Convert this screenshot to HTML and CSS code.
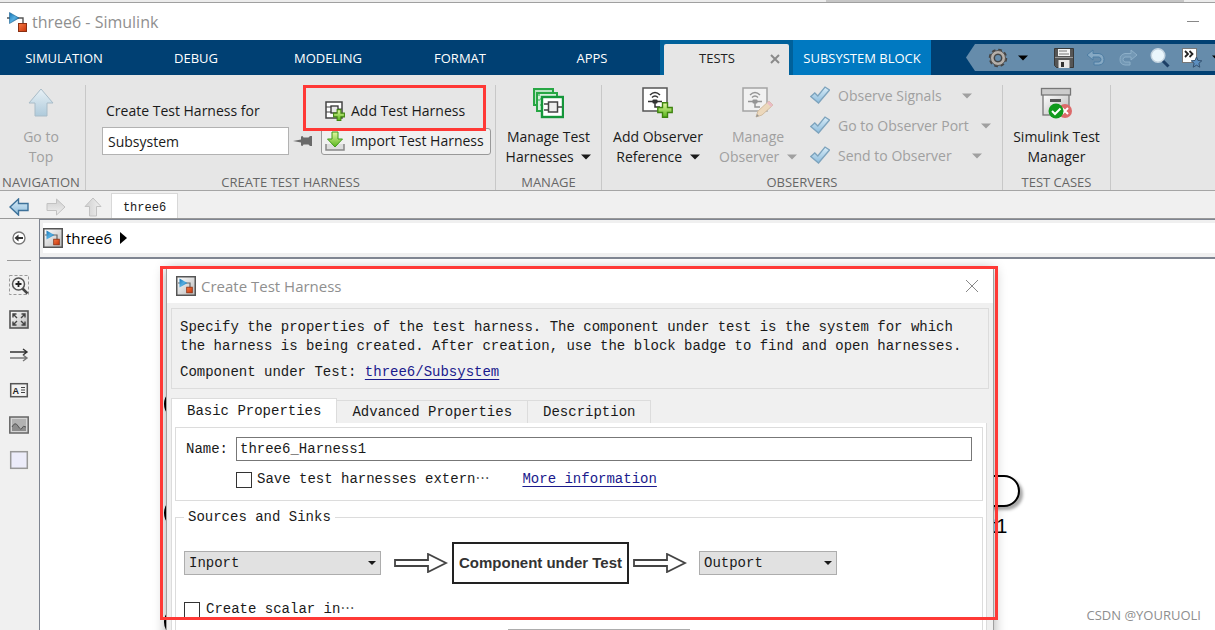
FILE: index.html
```html
<!DOCTYPE html>
<html lang="en">
<head>
<meta charset="utf-8">
<title>three6 - Simulink</title>
<link rel="stylesheet" href="styles.css">
</head>
<body>
<svg class="defs" aria-hidden="true">
  <defs>
    <linearGradient id="blue" x1="0" y1="0" x2="0" y2="1"><stop offset="0" stop-color="#d9ecf7"/><stop offset="1" stop-color="#8dbcdc"/></linearGradient>
    <linearGradient id="pale" x1="0" y1="0" x2="0" y2="1"><stop offset="0" stop-color="#e8f1f6"/><stop offset="1" stop-color="#aecadb"/></linearGradient>
    <linearGradient id="gray" x1="0" y1="0" x2="0" y2="1"><stop offset="0" stop-color="#f0f0f0"/><stop offset="1" stop-color="#cfcfcf"/></linearGradient>
    <linearGradient id="green" x1="0" y1="0" x2="0" y2="1"><stop offset="0" stop-color="#e4f9a0"/><stop offset="1" stop-color="#58b51c"/></linearGradient>
    <linearGradient id="tri" x1="0" y1="0" x2="1" y2="1"><stop offset="0" stop-color="#1473b4"/><stop offset=".5" stop-color="#55aee0"/><stop offset="1" stop-color="#0f5f9c"/></linearGradient>
    <linearGradient id="orange" x1="0" y1="0" x2="1" y2="1"><stop offset="0" stop-color="#f57a45"/><stop offset="1" stop-color="#c93409"/></linearGradient>
    <linearGradient id="steel" x1="0" y1="0" x2="1" y2="1"><stop offset="0" stop-color="#ffffff"/><stop offset="1" stop-color="#b8b8b8"/></linearGradient>
  </defs>
  <symbol id="model" viewBox="0 0 20 20">
    <path d="M0 6h3M10 6h6v6" fill="none" stroke="#555" stroke-width="1.4"/>
    <path d="M2.500 .5v11L12 6z" fill="url(#tri)" stroke="#1a5f8e" stroke-width=".6"/>
    <rect x="11.500" y="11.500" width="8" height="8" fill="url(#orange)" stroke="#8a2f12"/>
  </symbol>
  <symbol id="model-box" viewBox="0 0 20 20">
    <rect x=".75" y=".75" width="18.500" height="18.500" fill="url(#steel)" stroke="#555" stroke-width="1.500"/>
    <path d="M2 7h2M9 7h5v5" fill="none" stroke="#666" stroke-width="1.200"/>
    <path d="M3.500 2.500v9L11.500 7z" fill="url(#tri)"/>
    <rect x="10.700" y="11.200" width="5.600" height="5.600" fill="url(#orange)" stroke="#8a2f12" stroke-width=".8"/>
  </symbol>
  <symbol id="caret" viewBox="0 0 10 6"><path d="M0 .5h10L5 5.500z" fill="currentColor"/></symbol>
  <symbol id="check" viewBox="0 0 20 20">
    <path d="M.8 10.500l4-3.500 3 3L15 1l4.500 3L8.500 17z" fill="url(#blue)" stroke="#7da3bd" stroke-width="1.300"/>
  </symbol>
  <symbol id="plus" viewBox="0 0 16 16"><path d="M5.500.8h5v4.700h4.700v5h-4.700v4.700h-5v-4.700H.8v-5h4.700z" fill="url(#green)" stroke="#3f8410" stroke-width="1.400"/></symbol>
  <symbol id="arrow" viewBox="0 0 20 18"><path d="M1 9l8.500-8v4.500H19v7H9.500V17z"/></symbol>
  <symbol id="flow" viewBox="0 0 54 20"><path d="M1 7h33V1l18 9-18 9v-6H1z" fill="#fff" stroke="#444" stroke-width="1.800"/></symbol>
  <symbol id="observer" viewBox="0 0 32 32">
    <rect x="1" y="1" width="24" height="23" fill="#fff" stroke="#555" stroke-width="1.500"/>
    <path d="M8 8q5-5 10 0M10 10.500q3-3 6 0M6 14.500h14M13 14v6h5" fill="none" stroke="#333" stroke-width="1.500"/>
    <rect x="10.500" y="12.500" width="5" height="4" rx="1" fill="#333"/>
  </symbol>
</svg>

<div class="backdrop"><span class="behind"></span></div>
<header class="titlebar">
  <svg class="ico20"><use href="#model"/></svg>
  <h1>three6 - Simulink</h1>
  <button class="minimize" aria-label="Minimize"></button>
</header>

<nav class="tabs">
  <button>SIMULATION</button><button>DEBUG</button><button>MODELING</button><button>FORMAT</button><button>APPS</button>
  <div class="current">
    <button class="tests">TESTS</button>
    <button class="close" aria-label="Close tab"><svg viewBox="0 0 10 10"><path d="M1 1l8 8M9 1L1 9" stroke="#8a8a8a" stroke-width="2"/></svg></button>
  </div>
  <button class="block">SUBSYSTEM BLOCK</button>
  <div class="quick">
    <button aria-label="Settings"><svg class="ico20" viewBox="0 0 20 20"><circle cx="10" cy="10" r="8" fill="none" stroke="#444" stroke-width="2.500" stroke-dasharray="3.600 2.680"/><circle cx="10" cy="10" r="6" fill="#777" stroke="#b5afa9" stroke-width="3"/><circle cx="10" cy="10" r="7.500" fill="none" stroke="#555"/><circle cx="10" cy="10" r="3.600" fill="#668cab" stroke="#444" stroke-width="1.300"/></svg></button>
    <svg class="caret"><use href="#caret"/></svg>
    <span class="divider"></span>
    <button aria-label="Save"><svg class="ico20" viewBox="0 0 20 20"><path d="M.5.5h19v19h-17l-2-2z" fill="#555" stroke="#383838"/><rect x="4" y="1" width="12" height="7" fill="#f3f3f3"/><path d="M5 3h8M5 6h10" stroke="#777"/><rect x="1" y="9" width="18" height="1" fill="#999"/><rect x="4.500" y="12" width="11" height="8" fill="#e8e8e8"/><rect x="7" y="14" width="3" height="5" fill="#333"/></svg></button>
    <button aria-label="Undo"><svg class="ico20" viewBox="0 0 20 20"><path d="M1 7l6-5v3.500h6q5 1 5 6t-5 5.500H8v-3h5q2-.5 2-2.500t-2-2.500H7V12z" fill="#86a9c4" stroke="#4d7da3"/></svg></button>
    <button aria-label="Redo"><svg class="ico20" viewBox="0 0 20 20"><path d="M19 7l-6-5v3.500H7q-5 1-5 6T7 17h5v-3H7q-2-.5-2-2.500T7 9h6v3z" fill="#7398b5" stroke="#8dafc8"/></svg></button>
    <button aria-label="Search"><svg class="ico20" viewBox="0 0 20 20"><path d="M12 12l6.500 6.500" stroke="#1d3f66" stroke-width="3"/><circle cx="8" cy="7.500" r="6.800" fill="#eaf6fc" stroke="#c3d3df" stroke-width="1.500"/></svg></button>
    <button aria-label="Favorites"><svg class="ico20" viewBox="0 0 20 20"><rect x=".5" y=".5" width="14" height="14" fill="#fff" stroke="#777"/><path d="M3 3l3 3-3 3M7.500 3l3 3-3 3" fill="none" stroke="#222" stroke-width="1.800"/><path d="M14.500 9l1.500 3.500 3.800.3-2.900 2.500.9 3.900-3.300-2-3.300 2 .9-3.900-2.900-2.500 3.800-.3z" fill="#5c8fc0" stroke="#34516f"/></svg></button>
    <svg class="caret"><use href="#caret"/></svg>
  </div>
</nav>

<section class="toolstrip">
  <div class="group g-nav">
    <div class="tools">
      <button class="tool" disabled><svg class="ico32" viewBox="0 0 32 32"><path d="M16 2l12 14h-6v13H10V16H4z" fill="url(#pale)" stroke="#a9bcc8"/></svg><span>Go to<br>Top</span></button>
    </div>
    <h2>NAVIGATION</h2>
  </div>
  <div class="group g-create">
    <div class="harness">
      <label for="target">Create Test Harness for</label>
      <span></span>
      <button class="row-btn add"><svg class="ico20" viewBox="0 0 20 20"><rect x="1" y="1" width="16" height="16" fill="#fff" stroke="#444" stroke-width="1.500"/><path d="M1 6h5M1 11h5M12 8h5" stroke="#444" stroke-width="1.200"/><rect x="6" y="5" width="7" height="7" fill="#e8e8e8" stroke="#333" stroke-width="1.300"/><use href="#plus" x="8" y="8" width="12" height="12"/></svg>Add Test Harness</button>
      <input id="target" type="text" value="Subsystem">
      <svg class="pin" viewBox="0 0 20 12"><path d="M0 6l8-1.500V2q0-1 1.500-1l1 1.500h5L17 1h2v10h-2l-1.500-1.500h-5l-1 1.500Q8 11 8 10V7.500z" fill="#6a6a6a"/></svg>
      <button class="row-btn import"><svg class="ico20" viewBox="0 0 20 20"><path d="M1 13v6h18v-6" fill="#ddd" stroke="#888" stroke-width="1.500"/><path d="M7 1h6v7h4.500L10 16 2.500 8H7z" fill="url(#green)" stroke="#3f9a18"/></svg>Import Test Harness</button>
    </div>
    <h2>CREATE TEST HARNESS</h2>
    <span class="mark mark-add"></span>
  </div>
  <div class="group g-manage">
    <div class="tools">
      <button class="tool"><svg class="ico32" viewBox="0 0 32 32"><g stroke="#27a744" stroke-width="2"><rect x="2" y="2" width="19" height="16" fill="#b9e3c3"/><rect x="5" y="6" width="20" height="18" fill="#d5eedb"/><path d="M4 8h4M4 13h4M8 12h4M8 18h4" stroke-width="1.200"/><rect x="10" y="10" width="21" height="20" fill="#fff" stroke="#15963a" stroke-width="2.400"/></g><path d="M12 17h5M12 23h5M25 20h5" stroke="#444" stroke-width="1.300"/><rect x="16.500" y="15" width="9" height="10" fill="#eee" stroke="#444" stroke-width="1.500"/></svg><span>Manage Test<br>Harnesses <svg class="caret"><use href="#caret"/></svg></span></button>
    </div>
    <h2>MANAGE</h2>
  </div>
  <div class="group g-observers">
    <div class="tools">
      <button class="tool w-add"><svg class="ico32" viewBox="0 0 32 32"><use href="#observer" width="32" height="32"/><use href="#plus" x="15" y="15" width="16" height="16"/></svg><span>Add Observer<br>Reference <svg class="caret"><use href="#caret"/></svg></span></button>
      <button class="tool w-manage" disabled><svg class="ico32 faded" viewBox="0 0 32 32"><use href="#observer" width="32" height="32"/><path d="M14 30l2-6 11-10 4 4-11 10z" fill="#f5c98a" stroke="#b98a4c"/><path d="M25 16l2-2 4 4-2 2z" fill="#f08aa0"/><path d="M14 30l1-3 2 2z" fill="#333"/></svg><span>Manage<br>Observer <svg class="caret"><use href="#caret"/></svg></span></button>
      <div class="checks">
        <button disabled><svg class="ico20"><use href="#check"/></svg>Observe Signals<svg class="caret wide"><use href="#caret"/></svg></button>
        <button disabled><svg class="ico20"><use href="#check"/></svg>Go to Observer Port<svg class="caret"><use href="#caret"/></svg></button>
        <button disabled><svg class="ico20"><use href="#check"/></svg>Send to Observer<svg class="caret wide"><use href="#caret"/></svg></button>
      </div>
    </div>
    <h2>OBSERVERS</h2>
  </div>
  <div class="group g-cases">
    <div class="tools">
      <button class="tool"><svg class="ico32" viewBox="0 0 32 32"><rect x="3" y="7" width="26" height="21" fill="url(#steel)" stroke="#777" stroke-width="1.300"/><rect x="1.500" y="1.500" width="29" height="6.500" fill="#ccc" stroke="#777" stroke-width="1.300"/><path d="M10 13.500h11" stroke="#555" stroke-width="3"/><circle cx="25" cy="24" r="7" fill="#dc6a6a"/><path d="M22 21l6 6M28 21l-6 6" stroke="#fff" stroke-width="2"/><circle cx="16" cy="24" r="7.500" fill="#119a1d"/><path d="M12 24l3 3 5.500-5.500" fill="none" stroke="#fff" stroke-width="2"/></svg><span>Simulink Test<br>Manager</span></button>
    </div>
    <h2>TEST CASES</h2>
  </div>
</section>

<div class="doc-tabs">
  <button aria-label="Back"><svg class="nav-arrow back"><use href="#arrow"/></svg></button>
  <button aria-label="Forward" disabled><svg class="nav-arrow fwd"><use href="#arrow"/></svg></button>
  <button aria-label="Up" disabled><svg class="nav-arrow up"><use href="#arrow"/></svg></button>
  <button class="doc">three6</button>
</div>

<main class="workspace">
  <aside class="palette">
    <button aria-label="Hide browser"><svg class="ico20" viewBox="0 0 20 20"><circle cx="10" cy="10" r="6" fill="#fff" stroke="#777" stroke-width="1.300"/><path d="M5.500 10l4-3.500V9H14v2H9.500v2.500z" fill="#333"/></svg></button>
    <hr>
    <button aria-label="Zoom"><svg class="ico20" viewBox="0 0 20 20"><rect x=".5" y=".5" width="19" height="19" fill="none" stroke="#999" stroke-dasharray="3 2"/><path d="M13 13l5.500 5.500" stroke="#444" stroke-width="2.500"/><circle cx="9.500" cy="9" r="6" fill="#f5f5f5" stroke="#555" stroke-width="1.500"/><path d="M9.500 6v6M6.500 9h6" stroke="#222" stroke-width="1.800"/></svg></button>
    <button aria-label="Fit to view"><svg class="ico20" viewBox="0 0 20 20"><rect x="1" y="1" width="18" height="17" fill="url(#steel)" stroke="#555" stroke-width="1.600"/><path d="M4 7.500V4h3.500M12.500 4H16v3.500M16 11.500V15h-3.500M7.500 15H4v-3.500M4 4l4 4M16 4l-4 4M16 15l-4-4M4 15l4-4" fill="none" stroke="#444" stroke-width="1.400"/></svg></button>
    <button aria-label="Sample time"><svg class="ico20" viewBox="0 0 20 20"><g fill="none" stroke-width="1.400"><path d="M1 7h16M14 4l4 3-4 3" stroke="#333"/><path d="M1 13h16M14 10l4 3-4 3" stroke="#777"/></g></svg></button>
    <button aria-label="Annotation"><svg class="ico20" viewBox="0 0 20 20"><rect x="1.700" y="3.700" width="16.600" height="13" fill="#f2f2f2" stroke="#555" stroke-width="1.500"/><text class="glyph" x="3.500" y="13.500">A</text><path d="M12 7.500h4M12 10h4M12 12.500h4" stroke="#444"/></svg></button>
    <button aria-label="Image"><svg class="ico20" viewBox="0 0 20 20"><rect x=".8" y="2" width="18.400" height="16" fill="#d5d5d5" stroke="#666" stroke-width="1.500"/><rect x="3" y="4" width="14" height="12" fill="#b2b2b2"/><path d="M3 12q3-6 6-1t4 2 4-1v4H3z" fill="#8c8c8c"/><path d="M3 12q3-6 6-1t4 2 4-1" fill="none" stroke="#555"/></svg></button>
    <button aria-label="Area"><svg class="ico20" viewBox="0 0 20 20"><rect x="1.700" y="1.700" width="16.600" height="16.600" fill="#ececfa" stroke="#999" stroke-width="1.500"/></svg></button>
  </aside>
  <section class="editor">
    <div class="crumbs"><div class="path">
      <svg class="ico20"><use href="#model-box"/></svg><span>three6</span>
      <svg class="next" viewBox="0 0 8 12"><path d="M1 0l7 6-7 6z"/></svg>
    </div></div>
    <div class="canvas">
      <span class="port in-a"></span><span class="port in-b"></span><span class="port in-c"></span>
      <span class="port out"></span><span class="port-name">Out1</span>

      <section class="dialog" aria-label="Create Test Harness">
        <header>
          <svg class="ico20"><use href="#model-box"/></svg>
          <h2>Create Test Harness</h2>
          <button aria-label="Close"><svg viewBox="0 0 14 14"><path d="M1 1l12 12M13 1L1 13" stroke="#888" stroke-width="1"/></svg></button>
        </header>
        <div class="about">
          <p>Specify the properties of the test harness. The component under test is the system for which<br>the harness is being created. After creation, use the block badge to find and open harnesses.</p>
          <p>Component under Test: <a href="#subsystem">three6/Subsystem</a></p>
        </div>
        <div class="prop-tabs">
          <button class="on">Basic Properties</button><button>Advanced Properties</button><button>Description</button>
        </div>
        <div class="panel">
          <div class="box">
            <div class="name-row"><label for="name">Name:</label><input id="name" type="text" value="three6_Harness1"></div>
            <div class="save-row">
              <input id="save" type="checkbox"><label for="save">Save test harnesses extern<span class="dots" lang="zh-CN">…</span></label>
              <a href="#info">More information</a>
            </div>
          </div>
          <fieldset>
            <legend>Sources and Sinks</legend>
            <div class="flow-row">
              <span class="pick source"><select aria-label="Source"><option>Inport</option></select><svg class="caret"><use href="#caret"/></svg></span>
              <svg class="flow"><use href="#flow"/></svg>
              <span class="cut">Component under Test</span>
              <svg class="flow"><use href="#flow"/></svg>
              <span class="pick sink"><select aria-label="Sink"><option>Outport</option></select><svg class="caret"><use href="#caret"/></svg></span>
            </div>
            <div class="scalar-row"><input id="scalar" type="checkbox"><label for="scalar">Create scalar in<span class="dots" lang="zh-CN">…</span></label></div>
            <div class="more" role="presentation"></div>
          </fieldset>
        </div>
      </section>
      <span class="mark mark-dialog"></span>
      <span class="credit">CSDN @YOURUOLI</span>
    </div>
  </section>
</main>
</body>
</html>
```
FILE: styles.css
```css
* { box-sizing: border-box; }
body {
  margin: 0;
  height: 100vh;
  overflow: hidden;
  display: flex;
  flex-direction: column;
  background: #fff;
  color: #1a1a1a;
  font: 14px/20px "Open Sans", "Noto Sans", sans-serif;
}
h1, h2, p { margin: 0; font-weight: 400; }
button { border: 0; padding: 0; background: none; color: inherit; font: inherit; }
input, select { font: inherit; color: inherit; }
svg { display: block; flex: none; }
.defs { position: absolute; width: 0; height: 0; }
.ico20 { width: 20px; height: 20px; }
.ico32 { width: 32px; height: 32px; }
.caret { width: 10px; height: 6px; }
.mark { position: absolute; border: 3px solid #ff3936; pointer-events: none; }

.backdrop { flex: none; height: 3px; padding-left: 68%; background: #ececec; border-bottom: 1px solid #a0a0a0; }
.behind { display: block; width: 92%; max-width: 360px; height: 2px; background: #c6c6c6; }
.titlebar { flex: none; display: flex; align-items: center; height: 37px; padding: 0 16px 0 7px; gap: 5px; }
.titlebar h1 { flex: 1; color: #8f8f8f; font-size: 16px; }
.minimize { width: 12px; height: 1px; background: #888; }

.tabs { flex: none; display: flex; height: 35px; background: #004073; color: #fff; }
.tabs > button { flex: none; width: 132px; padding-right: 4px; font-size: 13px; }
.current { flex: none; display: flex; width: 133px; padding: 4px 4px 0; background: #00619b; }
.current button { background: #e6e6e6; }
.current .tests { flex: 1; padding: 0 0 4px 9px; border-radius: 2px 0 0; color: #222; font-size: 13px; }
.current .close { width: 28px; padding: 0 0 2px 9px; border-radius: 0 2px 0 0; }
.close svg { width: 10px; height: 10px; }
.tabs > .block { width: 138px; padding: 0; background: #0079c1; }
.quick {
  flex: none; display: flex; align-items: center; gap: 12px;
  width: 249px; margin: 4px 0 4px auto; padding-left: 22px; overflow: hidden;
  background: #668cab; color: #000;
  clip-path: polygon(0 50%, 9px 0, 100% 0, 100% 100%, 9px 100%);
}
.quick .caret { margin-left: -2px; }
.divider { width: 2px; height: 22px; margin-right: 2px; background: #48749a; }

.toolstrip { flex: none; display: flex; height: 116px; padding-top: 10px; background: #e6e6e6; border-bottom: 1px solid #a5a5a5; }
.group { position: relative; flex: none; display: flex; flex-direction: column; border-right: 1px solid #c8c8c8; }
.group h2 { height: 16px; color: #666; font-size: 13px; line-height: 16px; text-align: center; white-space: nowrap; }
.g-nav { width: 86px; padding-right: 3px; }
.g-create { width: 410px; }
.g-manage { width: 106px; }
.g-observers { width: 401px; }
.g-cases { width: 108px; }
.tools { flex: 1; display: flex; justify-content: center; align-items: flex-start; }
.tool { display: flex; flex-direction: column; align-items: center; gap: 8px; padding-top: 2px; white-space: nowrap; }
.tool .caret { display: inline-block; margin-left: 4px; vertical-align: 2px; }
button:disabled { color: #a0a0a0; }
.faded { opacity: .45; }
.harness { flex: 1; display: grid; grid-template: 30px 30px / 187px 24px 170px; gap: 0 4px; align-content: start; align-items: center; padding: 11px 0 0 16px; }
.harness label { padding-left: 4px; }
.harness input { width: 100%; height: 28px; padding: 0 5px; border: 1px solid #b2b2b2; background: #fff; }
.pin { width: 20px; height: 12px; }
.row-btn { display: flex; align-items: center; gap: 6px; height: 27px; padding-left: 3px; border: 1px solid transparent; border-radius: 3px; white-space: nowrap; }
.import { background: #f0f0f0; border-color: #999; }
.mark-add { left: 217px; top: 0; width: 183px; height: 46px; }
.g-observers .tools { justify-content: flex-start; gap: 12px; padding-left: 8px; }
.w-add { width: 96px; }
.w-manage { width: 80px; }
.checks { display: flex; flex-direction: column; margin-top: -4px; }
.checks button { display: flex; align-items: center; gap: 8px; height: 30px; white-space: nowrap; }
.checks .caret { margin-left: 4px; }
.checks .wide { margin-left: 12px; }

.doc-tabs { flex: none; display: flex; height: 28px; padding-left: 9px; background: #f0f0f0; border-bottom: 1px solid #999; }
.doc-tabs button { width: 37px; padding-top: 4px; }
.nav-arrow { width: 20px; height: 18px; fill: url(#gray); stroke: #c2c2c2; }
.nav-arrow.back { fill: url(#blue); stroke: #3d7199; stroke-width: 1.400; }
.nav-arrow.fwd { transform: rotate(180deg); }
.nav-arrow.up { transform: rotate(90deg); }
.doc-tabs .doc { width: 67px; margin: 2px 0 0 -9px; background: #fff; border: 1px solid #d8d8d8; border-bottom: 0; font: 12px "Liberation Mono", monospace; }

.workspace { flex: 1; display: flex; min-height: 0; }
.palette { flex: none; display: flex; flex-direction: column; align-items: center; gap: 15px; width: 40px; padding: 9px 1px 0 0; background: #f0f0f0; border-right: 1px solid #7f8591; }
.palette hr { width: 24px; margin: -3px 0 -1px; border: 0; border-top: 1px solid #999; }
.glyph { font: bold 9px "Liberation Sans", sans-serif; fill: #222; }
.editor { flex: 1; display: flex; flex-direction: column; min-width: 0; }
.crumbs { flex: none; height: 40px; padding: 3px 0 3px 3px; background: #f0f0f0; border-top: 1px solid #7f8591; border-bottom: 2px solid #7f8591; }
.path { display: flex; align-items: center; gap: 3px; height: 30px; background: #fff; color: #000; font-size: 15px; }
.next { width: 8px; height: 12px; margin-left: 4px; }
.canvas { position: relative; flex: 1; overflow: hidden; }

.port { position: absolute; width: 60px; height: 32px; border: 2px solid #000; border-radius: 16px; background: #fff; box-shadow: 3px 3px 3px #aaa; }
.in-a { left: 124px; top: 129px; }
.in-b { left: 124px; top: 238px; }
.in-c { left: 124px; top: 347px; }
.out { left: 920px; top: 216px; }
.port-name { position: absolute; left: 924px; top: 255px; color: #000; font: 20px/24px "Liberation Sans", sans-serif; }
.mark-dialog { left: 120px; top: 7px; width: 838px; height: 354px; }
.credit { position: absolute; right: 14px; bottom: 5px; color: #8e8e8e; font-size: 13px; }

.dialog {
  position: absolute; left: 126px; top: 8px; width: 828px;
  background: #f0f0f0; border: 1px solid #a0a0a0;
  box-shadow: 0 2px 12px #0005;
  font: 14px/19px "Liberation Mono", monospace;
}
.dialog header { display: flex; align-items: center; gap: 5px; height: 35px; padding: 0 14px 0 9px; background: #fff; }
.dialog h2 { flex: 1; color: #8f8f8f; font: 15px "Open Sans", sans-serif; }
.dialog header svg:not(.ico20) { width: 14px; height: 14px; }
.dialog a { color: #1a1a8c; text-underline-offset: 3px; }
.about { height: 81px; margin: 5px 4px 9px; padding: 9px 8px; border: 1px solid #dcdcdc; white-space: nowrap; }
.about p + p { margin-top: 7px; }
.prop-tabs { display: flex; align-items: flex-end; padding-left: 4px; }
.prop-tabs button { height: 23px; padding: 0 15px; border: 1px solid #dcdcdc; border-width: 1px 1px 0 0; }
.prop-tabs .on { height: 25px; border-left-width: 1px; background: #fff; }
.panel { margin: 0 6px 0 4px; padding: 4px 3px; background: #fff; border: 1px solid #dcdcdc; border-top: 0; }
.box { height: 74px; padding: 9px 10px; border: 1px solid #dcdcdc; }
.name-row { display: flex; align-items: center; gap: 8px; }
.name-row input { flex: 1; height: 24px; padding: 0 3px; border: 1px solid #777; }
.save-row { display: flex; align-items: center; gap: 5px; margin: 9px 0 0 50px; }
.save-row a { margin-left: 28px; }
input[type="checkbox"] { appearance: none; flex: none; width: 16px; height: 16px; margin: 0; border: 1px solid #333; background: #fff; }
.dots { font-family: "Noto Sans CJK SC", sans-serif; line-height: 1; }
fieldset { margin: 7px 0 0; padding: 0 8px; border: 1px solid #dcdcdc; }
legend { padding: 0 4px; }
.flow-row { display: flex; align-items: center; gap: 4px; margin-top: 15px; }
.pick { display: grid; align-items: center; }
.pick > * { grid-area: 1 / 1; }
.pick .caret { justify-self: end; width: 8px; margin-right: 5px; pointer-events: none; }
.pick select { appearance: none; width: 100%; height: 24px; padding: 0 4px; border: 1px solid #adadad; border-radius: 0; background: #e1e1e1; }
.source { width: 197px; margin-right: 9px; }
.sink { width: 138px; margin-left: 8px; }
.flow { width: 54px; height: 20px; }
.cut { width: 177px; height: 42px; border: 2px solid #222; color: #333; font: bold 15px/38px "Liberation Sans", sans-serif; text-align: center; white-space: nowrap; }
.scalar-row { display: flex; align-items: center; gap: 6px; margin-top: 16px; }
.more { width: 182px; height: 40px; margin: 10px 0 0 324px; border: 1px solid #adadad; }
```
